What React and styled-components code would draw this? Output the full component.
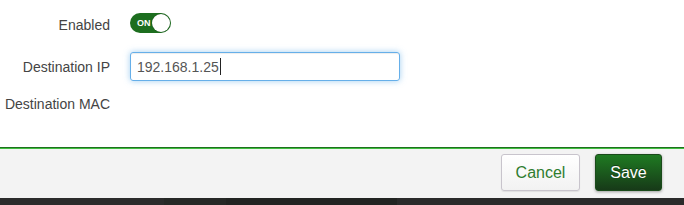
import styled, { createGlobalStyle } from 'styled-components'

const GlobalStyle = createGlobalStyle`
  html, body {
    margin: 0;
    padding: 0;
    background: #ffffff;
    font-family: "Liberation Sans", Arial, sans-serif;
  }
`

const Dialog = styled.div`
  width: 684px;
  height: 205px;
  display: flex;
  flex-direction: column;
  overflow: hidden;
`

const Body = styled.div`
  height: 147px;
  background: #ffffff;
  padding-top: 13px;
  box-sizing: border-box;
`

const Form = styled.div`
  display: grid;
  grid-template-columns: 110px 1fr;
  column-gap: 20px;
  row-gap: 0;
`

const Row = styled.div`
  display: contents;
`

const Label = styled.div`
  height: ${({ h }) => h}px;
  margin-bottom: ${({ mb }) => mb || 0}px;
  display: flex;
  align-items: center;
  justify-content: flex-end;
  padding-top: ${({ pt }) => pt || 0}px;
  box-sizing: border-box;
  font-size: 14px;
  color: #444;
  white-space: nowrap;
`

const Cell = styled.div`
  height: ${({ h }) => h}px;
  margin-bottom: ${({ mb }) => mb || 0}px;
  display: flex;
  align-items: center;
`

const Toggle = styled.div`
  width: 41px;
  height: 20px;
  border-radius: 10px;
  background: #1d6e1f;
  display: flex;
  align-items: center;
  justify-content: space-between;
  padding: 0 1px 0 7px;
  box-sizing: border-box;
`

const ToggleText = styled.span`
  color: #fff;
  font-size: 9px;
  font-weight: bold;
`

const Knob = styled.span`
  width: 18px;
  height: 18px;
  border-radius: 50%;
  background: #fff;
  box-shadow: 0 0 1px rgba(0, 0, 0, 0.5);
`

const Input = styled.div`
  width: 270px;
  height: 29px;
  box-sizing: border-box;
  border: 1px solid #66afe9;
  border-radius: 3px;
  box-shadow: inset 0 1px 1px rgba(0, 0, 0, 0.075), 0 0 6px rgba(102, 175, 233, 0.6);
  display: flex;
  align-items: center;
  padding-left: 6px;
  font-size: 14px;
  color: #555;
`

const Caret = styled.span`
  width: 1px;
  height: 17px;
  background: #222;
  margin-left: 1px;
`

const Footer = styled.div`
  height: 51px;
  background: #f3f3f3;
  border-top: 1px solid #1f6f1f;
  box-shadow: inset 0 1px 0 #3fbf3f;
  display: flex;
  align-items: flex-start;
  justify-content: flex-end;
  padding: 6px 22px 0 0;
  box-sizing: border-box;
  gap: 15px;
`

const Button = styled.button`
  height: 37px;
  border-radius: 3px;
  font-family: "Liberation Sans", Arial, sans-serif;
  font-size: 16px;
  cursor: pointer;
  ${({ primary }) =>
    primary
      ? `
    width: 67px;
    padding: 0;
    color: #fff;
    background: linear-gradient(#1f7a22, #173a18);
    border: 1px solid #1a4a1a;
    box-shadow: 0 1px 3px rgba(0, 0, 0, 0.35);
    text-shadow: 0 -1px 0 rgba(0, 0, 0, 0.4);
  `
      : `
    width: 79px;
    padding: 0;
    color: #2f7d2f;
    background: linear-gradient(#ffffff, #f2f2f2);
    border: 1px solid #c8c4cc;
    box-shadow: 0 1px 1px rgba(0, 0, 0, 0.08);
  `}
`

const Backdrop = styled.div`
  flex: 1;
  background: linear-gradient(90deg, #2b2b2b 0%, #2b2b2b 24%, #262826 24%, #262826 33%, #222422 33%, #222422 58%, #2a2a2a 58%, #2a2a2a 100%);
`

export default function App() {
  return (
    <Dialog>
      <GlobalStyle />
      <Body>
        <Form>
          <Row>
            <Label h={20} pt={4} mb={19}>Enabled</Label>
            <Cell h={20} mb={19}>
              <Toggle>
                <ToggleText>ON</ToggleText>
                <Knob />
              </Toggle>
            </Cell>
          </Row>
          <Row>
            <Label h={29} mb={13}>Destination IP</Label>
            <Cell h={29} mb={13}>
              <Input>
                192.168.1.25
                <Caret />
              </Input>
            </Cell>
          </Row>
          <Row>
            <Label h={20}>Destination MAC</Label>
            <Cell h={20} />
          </Row>
        </Form>
      </Body>
      <Footer>
        <Button>Cancel</Button>
        <Button primary>Save</Button>
      </Footer>
      <Backdrop />
    </Dialog>
  )
}
